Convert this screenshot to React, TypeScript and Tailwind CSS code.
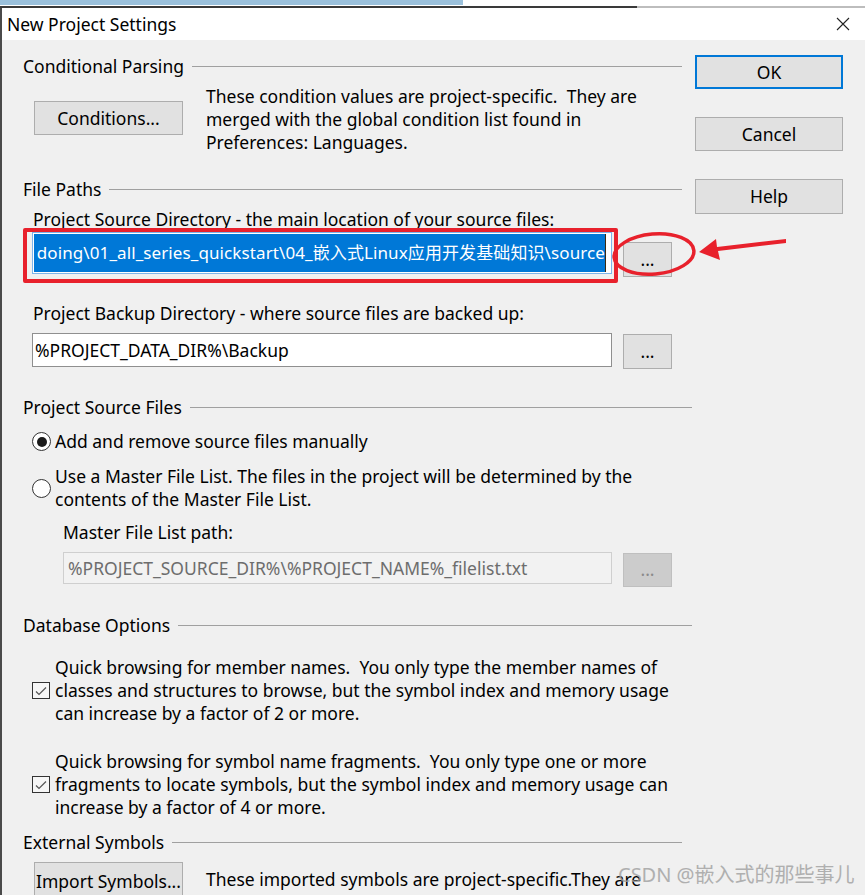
import React from "react";

function GroupHeader({ title, className }: { title: string; className: string }) {
  return (
    <div className={`flex h-[23px] items-center ${className}`}>
      <span className="whitespace-nowrap">{title}</span>
      <div className="ml-2 h-px flex-1 bg-[#a0a0a0]" />
    </div>
  );
}

function Button({ children, className }: { children: React.ReactNode; className: string }) {
  return (
    <div
      className={`flex shrink-0 items-center justify-center border border-[#adadad] bg-[#e1e1e1] ${className}`}
    >
      {children}
    </div>
  );
}

function CheckBox() {
  return (
    <div className="ml-[9px] flex h-[17px] w-[18px] shrink-0 items-center justify-center border border-[#333] bg-[#f6f6f6]">
      <svg width="14" height="12" viewBox="0 0 14 12">
        <path d="M2 6.5 L5 9.5 L12 2.5" fill="none" stroke="#555" strokeWidth="1.2" />
      </svg>
    </div>
  );
}

function Radio({ checked }: { checked?: boolean }) {
  return (
    <div className="ml-[9px] flex h-[19px] w-[19px] shrink-0 items-center justify-center rounded-full border-[1.5px] border-[#333] bg-white">
      {checked && <div className="h-[10px] w-[10px] rounded-full bg-[#1a1a1a]" />}
    </div>
  );
}

export default function App() {
  return (
    <div className="relative h-[895px] w-[865px] overflow-hidden bg-[#f0f0f0] font-['Noto_Sans','Noto_Sans_CJK_SC',sans-serif] text-[17.5px] leading-[23px] text-black">
      {/* window edge above the dialog */}
      <div className="flex h-[6px] bg-white">
        <div className="h-[5px] w-[463px] bg-[#9bc1dc]" />
      </div>
      <div className="flex h-[2px]">
        <div className="w-[637px] bg-[#3a3a3a]" />
        <div className="flex-1 bg-[#bdbdbd]" />
      </div>

      <div className="border-l-2 border-[#4a4a4a]">
        {/* Title bar */}
        <div className="flex h-[32px] items-center justify-between bg-white pl-[5px] pr-[15px]">
          <span className="text-[17.5px]">New Project Settings</span>
          <svg width="14" height="14" viewBox="0 0 14 14">
            <path d="M1 1 L13 13 M13 1 L1 13" stroke="#222" strokeWidth="1.1" />
          </svg>
        </div>

        {/* Body */}
        <div className="flex">
          <div className="flex w-[690px] flex-col pl-[21px]">
            <GroupHeader title="Conditional Parsing" className="mt-[15px] w-[659px]" />
            <div className="mt-[7px] flex items-start">
              <Button className="ml-[11px] mt-[16px] h-[34px] w-[149px]">Conditions...</Button>
              <p className="ml-[23px] whitespace-nowrap">
                These condition values are project-specific.&nbsp; They are
                <br />
                merged with the global condition list found in
                <br />
                Preferences: Languages.
              </p>
            </div>

            <GroupHeader title="File Paths" className="mt-[24px] w-[659px]" />
            <div className="ml-[10px] mt-[7px]">Project Source Directory - the main location of your source files:</div>
            <div className="relative mt-[1px] flex items-start">
              <div className="ml-[9px] flex h-[42px] w-[580px] items-center overflow-hidden border border-[#7eb4ea] bg-white pl-px pr-[5px]">
                <span className="h-[38px] min-w-0 flex-1 overflow-hidden whitespace-nowrap bg-[#0078d7] text-right text-[17px] leading-[38px] tracking-[0.1px] text-white">
                  doing\01_all_series_quickstart\04_嵌入式Linux应用开发基础知识\source
                </span>
                <div className="h-[38px] w-px shrink-0 bg-[#3a2a10]" />
              </div>
              <Button className="ml-[11px] mt-[10px] h-[35px] w-[49px] leading-none">...</Button>
              {/* red annotation frame */}
              <div className="pointer-events-none absolute left-[0px] top-[-4px] h-[55px] w-[595px] rounded-[2px] border-4 border-[#e8212c]" />
            </div>

            <div className="ml-[10px] mt-[25px]">Project Backup Directory - where source files are backed up:</div>
            <div className="mt-[8px] flex items-start">
              <div className="ml-[9px] flex h-[34px] w-[580px] items-center border border-[#8f8f8f] bg-white px-[2px]">
                %PROJECT_DATA_DIR%\Backup
              </div>
              <Button className="ml-[11px] mt-[1px] h-[35px] w-[49px] leading-none">...</Button>
            </div>

            <GroupHeader title="Project Source Files" className="mt-[27px] w-[669px]" />
            <div className="mt-[11px] flex items-center">
              <Radio checked />
              <span className="ml-[4px]">Add and remove source files manually</span>
            </div>
            <div className="mt-[12px] flex items-center">
              <Radio />
              <p className="ml-[4px]">
                Use a Master File List. The files in the project will be determined by the
                <br />
                contents of the Master File List.
              </p>
            </div>
            <div className="ml-[40px] mt-[10px]">Master File List path:</div>
            <div className="mt-[8px] flex items-start">
              <div className="ml-[40px] flex h-[32px] w-[549px] items-center border border-[#cfcfcf] bg-[#f2f2f2] px-[4px] text-[#6d6d6d]">
                %PROJECT_SOURCE_DIR%\%PROJECT_NAME%_filelist.txt
              </div>
              <div className="ml-[11px] mt-[1px] flex h-[34px] w-[49px] items-center justify-center border border-[#bfbfbf] bg-[#cccccc] leading-none text-[#8a8a8a]">
                ...
              </div>
            </div>

            <GroupHeader title="Database Options" className="mt-[27px] w-[669px]" />
            <div className="mt-[19px] flex items-center">
              <CheckBox />
              <p className="ml-[5px]">
                Quick browsing for member names.&nbsp; You only type the member names of
                <br />
                classes and structures to browse, but the symbol index and memory usage
                <br />
                can increase by a factor of 2 or more.
              </p>
            </div>
            <div className="mt-[25px] flex items-center">
              <CheckBox />
              <p className="ml-[5px]">
                Quick browsing for symbol name fragments.&nbsp; You only type one or more
                <br />
                fragments to locate symbols, but the symbol index and memory usage can
                <br />
                increase by a factor of 4 or more.
              </p>
            </div>

            <GroupHeader title="External Symbols" className="mt-[12px] w-[659px]" />
            <div className="mt-[8px] flex items-start">
              <Button className="ml-[11px] h-[40px] w-[149px] pb-[2px]">Import Symbols...</Button>
              <p className="ml-[23px] mt-[6px] whitespace-nowrap">
                These imported symbols are project-specific.They are
                <br />
                typically used for SDK include files, or external assemblies.
              </p>
            </div>
          </div>

          {/* Right buttons */}
          <div className="ml-[3px] flex w-[148px] flex-col gap-[28px] pt-[15px]">
            <div className="flex h-[34px] items-center justify-center border-2 border-[#0078d7] bg-[#e1e1e1]">OK</div>
            <Button className="h-[34px] w-[148px]">Cancel</Button>
            <Button className="h-[35px] w-[148px]">Help</Button>
          </div>
        </div>
      </div>

      {/* red annotation: ellipse and arrow */}
      <svg className="pointer-events-none absolute left-0 top-0" width="865" height="895" viewBox="0 0 865 895">
        <ellipse cx="654" cy="254" rx="40" ry="20" transform="rotate(-5 654 254)" fill="none" stroke="#e8212c" strokeWidth="3.5" />
        <polygon points="699,252 716,239 717,247 786,239 786,243 718,251 720,260" fill="#e8212c" />
      </svg>

      {/* watermark */}
      <div className="pointer-events-none absolute left-[618px] top-[862px] whitespace-nowrap text-[20px] leading-[26px] text-[#a0a0a0] opacity-80">
        CSDN @嵌入式的那些事儿
      </div>
    </div>
  );
}
